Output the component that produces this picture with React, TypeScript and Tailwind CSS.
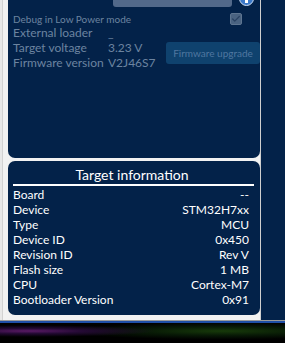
import { Check } from "lucide-react";

const targetInfo = [
  { label: "Board", value: "--" },
  { label: "Device", value: "STM32H7xx" },
  { label: "Type", value: "MCU" },
  { label: "Device ID", value: "0x450" },
  { label: "Revision ID", value: "Rev V" },
  { label: "Flash size", value: "1 MB" },
  { label: "CPU", value: "Cortex-M7" },
  { label: "Bootloader Version", value: "0x91" },
];

const App = () => {
  return (
    <div className="w-[285px] h-[343px] overflow-hidden flex flex-col font-['Lato',sans-serif] bg-black">
      <div className="flex flex-row h-[320px]">
        {/* window area */}
        <div className="w-[260px] h-full flex flex-row bg-[#f2f2f2]">
          <div className="w-[3px] bg-[#e8e8e8] border-r border-[#d2d2d2]" />
          <div className="flex-1 flex flex-col pl-[5px] pr-0 pb-[5px]">
            {/* connection panel */}
            <div className="relative h-[158px] bg-[#032249] rounded-b-[7px] pl-[5px] pr-0">
              <div className="absolute left-[105px] top-0 w-[119px] h-[7px] bg-[#52698a] rounded-b-[3px]" />
              <div className="absolute left-[231px] -top-[9px] w-[15px] h-[15px] rounded-full bg-[#3a78c8] border border-[#cfe0f5] flex items-end justify-center">
                <div className="w-[3px] h-[5px] bg-white mb-[2px]" />
              </div>
              <div className="flex flex-row items-center justify-between h-[13px] mt-[12px] pr-[18px]">
                <span className="text-[10px] leading-none text-[#6c84a0]">Debug in Low Power mode</span>
                <div className="w-[12px] h-[12px] rounded-[2px] bg-[#4a6381] border border-[#5e7590] flex items-center justify-center">
                  <Check className="w-[10px] h-[10px] text-[#2a4262]" strokeWidth={3} />
                </div>
              </div>
              <div className="flex flex-row">
                <div className="flex flex-col text-[12px] leading-[15px] text-[#6c84a0]">
                  <div className="flex flex-row">
                    <span className="w-[95px]">External loader</span>
                    <span>_</span>
                  </div>
                  <div className="flex flex-row">
                    <span className="w-[95px]">Target voltage</span>
                    <span>3.23 V</span>
                  </div>
                  <div className="flex flex-row">
                    <span className="w-[95px]">Firmware version</span>
                    <span>V2J46S7</span>
                  </div>
                </div>
                <div className="ml-auto mt-[17px] w-[94px] h-[22px] rounded-[3px] bg-[#0f426e] flex items-center justify-center text-[10px] text-[#4f77a0]">
                  Firmware upgrade
                </div>
              </div>
            </div>
            <div className="h-[3px]" />
            {/* target information panel */}
            <div className="flex-1 bg-[#032249] rounded-[7px] px-[5px] pt-[5px] text-white">
              <div className="text-center text-[14px] leading-[17px] mr-[4px]">Target information</div>
              <div className="h-[2px] bg-white mt-[1px] mb-[1px] mr-[1px]" />
              <div className="flex flex-col text-[12px] leading-[15px] pr-[6px]">
                {targetInfo.map((row) => (
                  <div key={row.label} className="flex flex-row justify-between">
                    <span>{row.label}</span>
                    <span>{row.value}</span>
                  </div>
                ))}
              </div>
            </div>
          </div>
        </div>
        <div className="w-px h-full bg-[#cfcfcf]" />
        <div className="flex-1 h-full bg-[#032249]" />
      </div>
      <div className="h-px bg-[#9a9a9a]" />
      <div className="h-[2px] bg-[#1f4fa6]" />
      <div className="flex-1 bg-[radial-gradient(ellipse_at_10%_40%,#5a1a66_0%,#240a34_15%,transparent_35%),radial-gradient(ellipse_at_78%_40%,#173a0a_0%,#081a06_25%,transparent_50%)] bg-black" />
    </div>
  );
};

export default App;
